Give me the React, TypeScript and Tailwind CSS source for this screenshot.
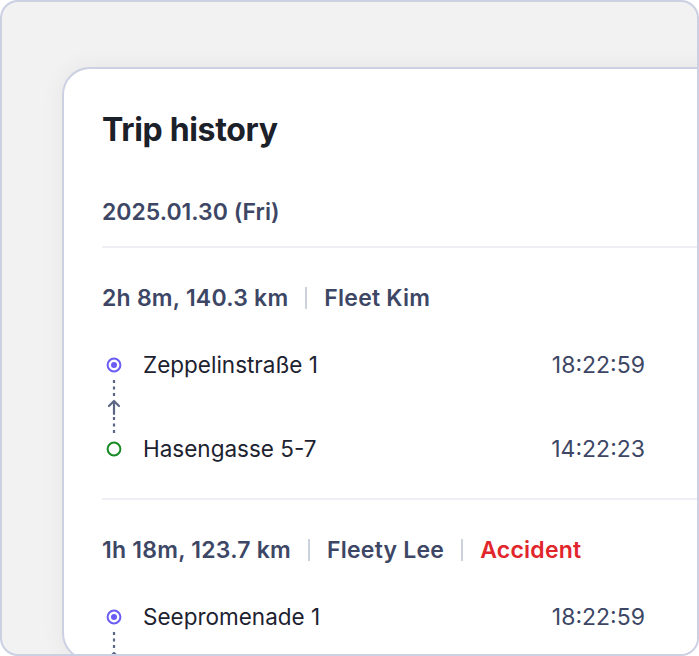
import React from 'react';

type Stop = { address: string; time: string; kind: 'end' | 'start' };

type Trip = {
    summary: string;
    driver: string;
    tag?: string;
    stops: Stop[];
};

// second trip runs off the bottom of the frame, only its first stop shows
const trips: Trip[] = [
    {
        summary: '2h 8m, 140.3 km',
        driver: 'Fleet Kim',
        stops: [
            { address: 'Zeppelinstraße 1', time: '18:22:59', kind: 'end' },
            { address: 'Hasengasse 5-7', time: '14:22:23', kind: 'start' },
        ],
    },
    {
        summary: '1h 18m, 123.7 km',
        driver: 'Fleety Lee',
        tag: 'Accident',
        stops: [{ address: 'Seepromenade 1', time: '18:22:59', kind: 'end' }],
    },
];

function EndIcon() {
    return (
        <svg width="16" height="16" viewBox="0 0 16 16">
            <circle cx="8" cy="8" r="6.4" fill="none" stroke="#6a5cf5" strokeWidth="2" />
            <circle cx="8" cy="8" r="3" fill="#6a5cf5" />
        </svg>
    );
}

function StartIcon() {
    return (
        <svg width="16" height="16" viewBox="0 0 16 16">
            <circle cx="8" cy="8" r="6.4" fill="none" stroke="#178a25" strokeWidth="2" />
        </svg>
    );
}

function Connector() {
    return (
        <svg width="16" height="56" viewBox="0 0 16 56">
            <line x1="8" y1="1" x2="8" y2="20" stroke="#5b6684" strokeWidth="2.2" strokeDasharray="3 3.5" />
            <path d="M8 35 V22 M3 27 L8 22 L13 27" fill="none" stroke="#5b6684" strokeWidth="2.2" strokeLinecap="round" strokeLinejoin="round" />
            <line x1="8" y1="38" x2="8" y2="56" stroke="#5b6684" strokeWidth="2.2" strokeDasharray="3 3.5" />
        </svg>
    );
}

function Sep() {
    return <span className="mx-[17px] h-[22px] w-[2px] bg-[#ccd1de]" />;
}

function StopRow({ stop }: { stop: Stop }) {
    return (
        <div className="flex h-[28px] w-[543px] items-center">
            <div className="flex w-[24px] justify-center">
                {stop.kind === 'end' ? <EndIcon /> : <StartIcon />}
            </div>
            <span className="ml-[17px] flex-1 text-[22.5px] text-[#1d2230]">{stop.address}</span>
            <span className="text-[23px] text-[#3d4765]">{stop.time}</span>
        </div>
    );
}

function TripBlock({ trip, last }: { trip: Trip; last: boolean }) {
    return (
        <div className="flex flex-col">
            <div className="mt-[36px] flex h-[28px] items-center text-[23px] font-semibold tracking-[0.01em] text-[#3d4765]">
                <span>{trip.summary}</span>
                <Sep />
                <span>{trip.driver}</span>
                {trip.tag && (
                    <>
                        <Sep />
                        <span className="text-[#e1252b]">{trip.tag}</span>
                    </>
                )}
            </div>
            <div className="mt-[39px] flex flex-col">
                <StopRow stop={trip.stops[0]} />
                <div className="flex w-[24px] justify-center">
                    <Connector />
                </div>
                {trip.stops[1] && <StopRow stop={trip.stops[1]} />}
            </div>
            {!last && <div className="mt-[35px] h-[2px] bg-[#eff0f5]" />}
        </div>
    );
}

export default function App() {
    return (
        <div
            className="h-[656px] w-[699px] overflow-hidden rounded-[18px] border-2 border-[#cbd0e2] bg-[#f2f2f2] pl-[60px] pt-[65px]"
            style={{ fontFamily: 'Inter, "Noto Sans", sans-serif' }}
        >
            <div className="h-[594px] w-[700px] overflow-hidden rounded-[28px] border-2 border-[#cbd0e2] bg-white pl-[38px] pt-[41px] shadow-[0_0_24px_rgba(0,0,0,0.06)]">
                <h1 className="h-[40px] text-[32px] font-bold leading-[40px] tracking-[-0.01em] text-[#1b2029]">Trip history</h1>
                <div className="mt-[48px] h-[28px] text-[23px] font-semibold leading-[28px] text-[#3d4765]">2025.01.30 (Fri)</div>
                <div className="mt-[20px] h-[2px] bg-[#eff0f5]" />
                {trips.map((t, i) => (
                    <TripBlock key={i} trip={t} last={i === trips.length - 1} />
                ))}
            </div>
        </div>
    );
}
